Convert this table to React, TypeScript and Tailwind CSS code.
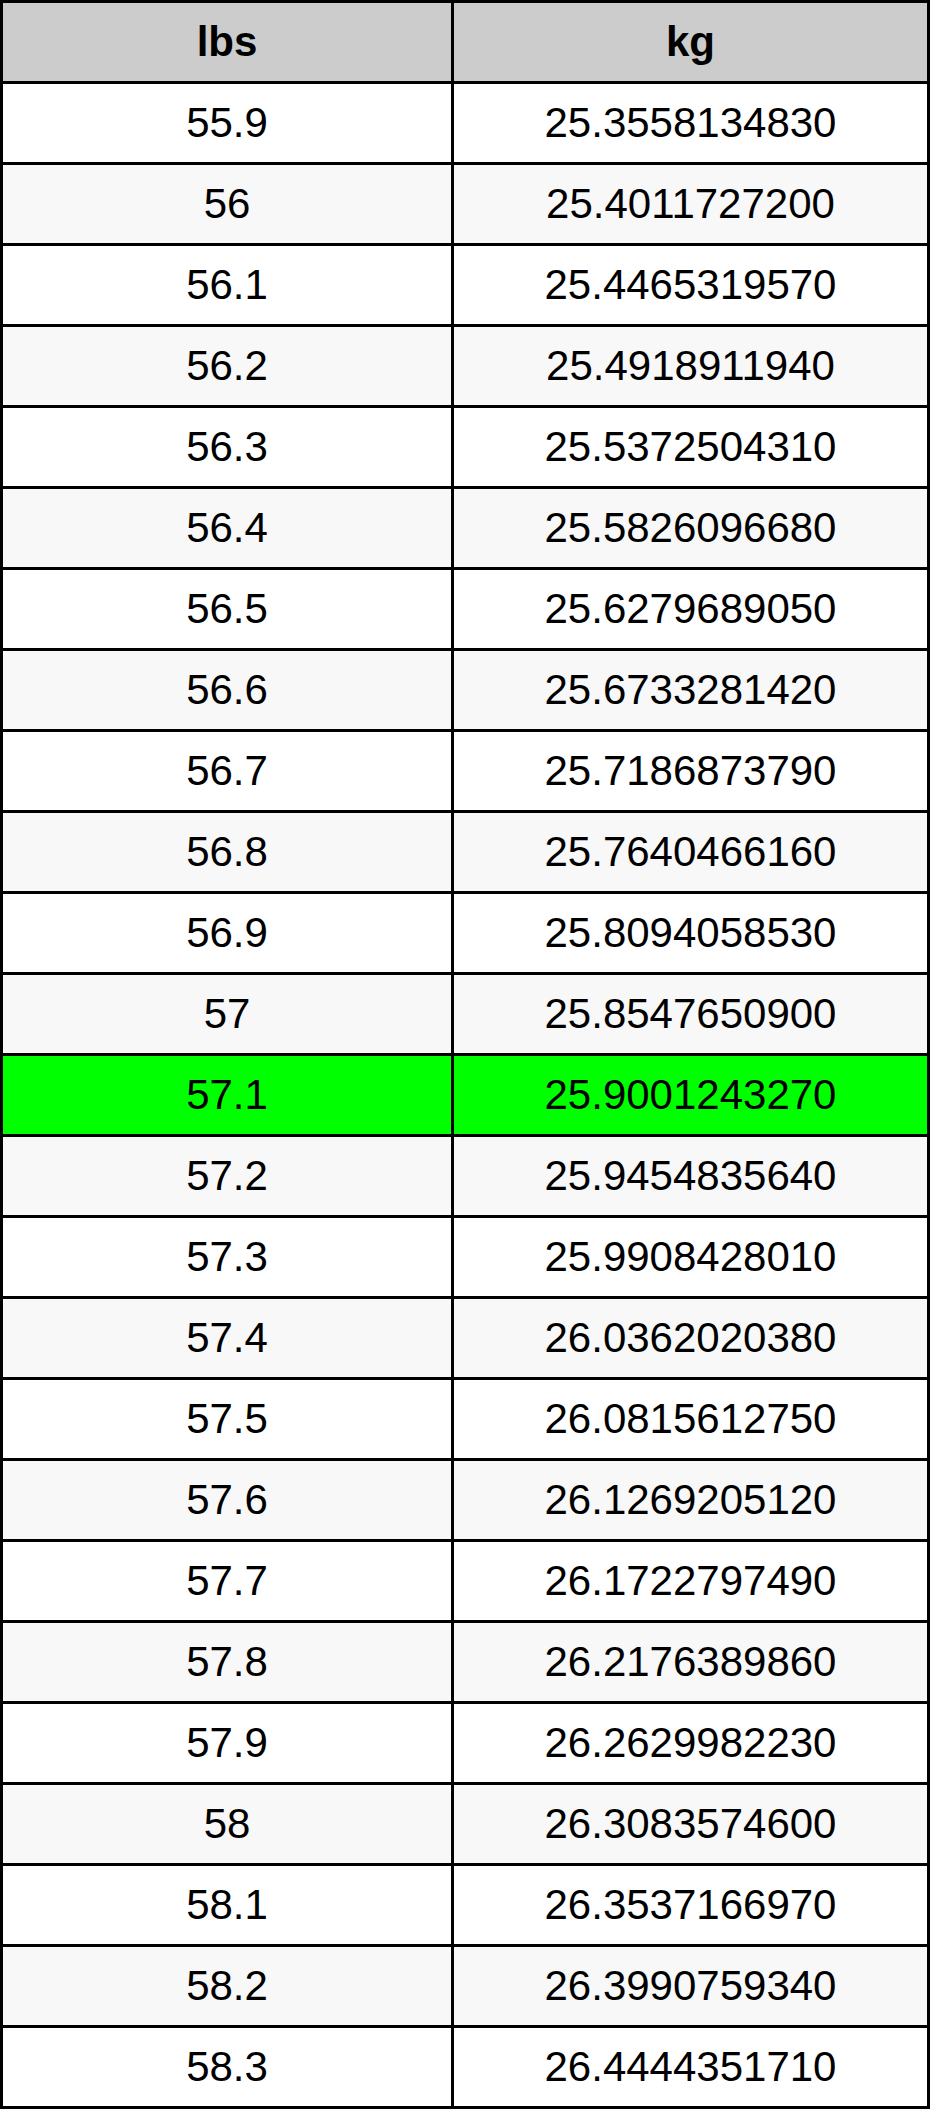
import React from 'react';

const rows: [string, string][] = [
  ['55.9', '25.3558134830'],
  ['56', '25.4011727200'],
  ['56.1', '25.4465319570'],
  ['56.2', '25.4918911940'],
  ['56.3', '25.5372504310'],
  ['56.4', '25.5826096680'],
  ['56.5', '25.6279689050'],
  ['56.6', '25.6733281420'],
  ['56.7', '25.7186873790'],
  ['56.8', '25.7640466160'],
  ['56.9', '25.8094058530'],
  ['57', '25.8547650900'],
  ['57.1', '25.9001243270'],
  ['57.2', '25.9454835640'],
  ['57.3', '25.9908428010'],
  ['57.4', '26.0362020380'],
  ['57.5', '26.0815612750'],
  ['57.6', '26.1269205120'],
  ['57.7', '26.1722797490'],
  ['57.8', '26.2176389860'],
  ['57.9', '26.2629982230'],
  ['58', '26.3083574600'],
  ['58.1', '26.3537166970'],
  ['58.2', '26.3990759340'],
  ['58.3', '26.4444351710'],
];

const HIGHLIGHT = '57.1';

export default function App() {
  return (
    <div className="w-[930px] bg-white text-black" style={{ fontFamily: '"Liberation Sans", Arial, sans-serif' }}>
      <div className="grid grid-cols-[451px_476px] border-t-[3px] border-l-[3px] border-black text-[42px] leading-none">
        <div className="h-[81px] flex items-center justify-center border-r-[3px] border-b-[3px] border-black bg-[#cccccc] font-bold">lbs</div>
        <div className="h-[81px] flex items-center justify-center border-r-[3px] border-b-[3px] border-black bg-[#cccccc] font-bold">kg</div>
        {rows.map(([lbs, kg], i) => {
          const bg = lbs === HIGHLIGHT ? 'bg-[#00ff00]' : i % 2 === 0 ? 'bg-white' : 'bg-[#f8f8f8]';
          return (
            <React.Fragment key={lbs}>
              <div className={`h-[81px] flex items-center justify-center border-r-[3px] border-b-[3px] border-black ${bg}`}>{lbs}</div>
              <div className={`h-[81px] flex items-center justify-center border-r-[3px] border-b-[3px] border-black ${bg}`}>{kg}</div>
            </React.Fragment>
          );
        })}
      </div>
    </div>
  );
}
